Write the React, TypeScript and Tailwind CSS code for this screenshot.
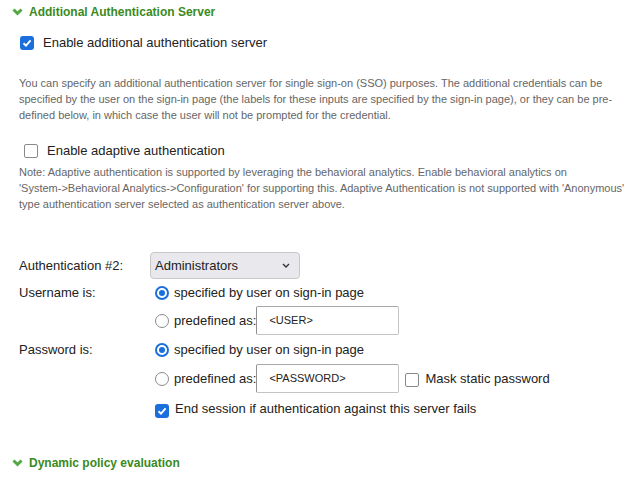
import React from 'react';

const Chevron: React.FC = () => (
  <svg width="11" height="8" viewBox="0 0 11 8" className="shrink-0">
    <polyline points="1.5,1.5 5.5,5.5 9.5,1.5" fill="none" stroke="#52a844" strokeWidth="3" strokeLinejoin="miter" />
  </svg>
);

const Check: React.FC<{ on?: boolean }> = ({ on }) =>
  on ? (
    <span className="flex h-[14px] w-[14px] shrink-0 items-center justify-center rounded-[3px] bg-[#1a6fdc]">
      <svg width="10" height="10" viewBox="0 0 10 10">
        <polyline points="1.5,5.2 4,7.6 8.6,2.4" fill="none" stroke="white" strokeWidth="1.9" />
      </svg>
    </span>
  ) : (
    <span className="block h-[14px] w-[14px] shrink-0 rounded-[2px] border-[1.5px] border-[#8a8a8a] bg-white" />
  );

const Radio: React.FC<{ on?: boolean }> = ({ on }) =>
  on ? (
    <span className="flex h-[14px] w-[14px] shrink-0 items-center justify-center rounded-full border-2 border-[#1a6fdc] bg-white">
      <span className="h-[6px] w-[6px] rounded-full bg-[#1a6fdc]" />
    </span>
  ) : (
    <span className="block h-[14px] w-[14px] shrink-0 rounded-full border-[1.5px] border-[#8a8a8a] bg-white" />
  );

const Header: React.FC<{ title: string }> = ({ title }) => (
  <div className="flex h-[16px] items-center gap-[6px] pl-[12px]">
    <Chevron />
    <span className="text-[12px] font-bold text-[#3a8a22]">{title}</span>
  </div>
);

const TextBox: React.FC<{ value: string }> = ({ value }) => (
  <div className="flex h-[29px] w-[143px] items-center rounded-[2px] border border-[#c4c4c4] border-l-[#8f8f8f] border-t-[#a8a8a8] bg-white pl-[12px] text-[11px] text-[#222]">
    {value}
  </div>
);

export default function App() {
  return (
    <div className="min-h-[485px] w-[628px] bg-white pt-[4px] text-[#333]" style={{ fontFamily: '"Liberation Sans", Arial, sans-serif' }}>
      <Header title="Additional Authentication Server" />

      <div className="mt-[13px] flex h-[20px] items-center gap-[9px] pl-[20px] text-[13px] text-[#222]">
        <Check on />
        <span>Enable additional authentication server</span>
      </div>

      <div className="mt-[22px] pl-[19px] text-[11px] leading-[16px] text-[#666]">
        <div className="whitespace-nowrap">You can specify an additional authentication server for single sign-on (SSO) purposes. The additional credentials can be</div>
        <div className="whitespace-nowrap">specified by the user on the sign-in page (the labels for these inputs are specified by the sign-in page), or they can be pre-</div>
        <div className="whitespace-nowrap">defined below, in which case the user will not be prompted for the credential.</div>
      </div>

      <div className="mt-[18px] flex h-[20px] items-center gap-[9px] pl-[24px] text-[13px] text-[#222]">
        <Check />
        <span>Enable adaptive authentication</span>
      </div>

      <div className="mt-[3px] pl-[19px] text-[11px] leading-[16px] text-[#666]">
        <div className="whitespace-nowrap">Note: Adaptive authentication is supported by leveraging the behavioral analytics. Enable behavioral analytics on</div>
        <div className="whitespace-nowrap">'System-&gt;Behavioral Analytics-&gt;Configuration' for supporting this. Adaptive Authentication is not supported with 'Anonymous'</div>
        <div className="whitespace-nowrap">type authentication server selected as authentication server above.</div>
      </div>

      <div className="mt-[40px] grid grid-cols-[131px_1fr] pl-[19px] text-[13px] text-[#222]">
        <div className="flex h-[27px] items-center">Authentication #2:</div>
        <div className="flex h-[27px] w-[150px] items-center justify-between rounded-[4px] border border-[#c8c8c8] bg-[#e9e9ed] pl-[4px] pr-[9px]">
          <span>Administrators</span>
          <svg width="8" height="5" viewBox="0 0 8 5">
            <polyline points="1,1 4,4 7,1" fill="none" stroke="#333" strokeWidth="1.4" />
          </svg>
        </div>

        <div className="mt-[4px] flex h-[20px] items-center">Username is:</div>
        <div className="mt-[4px] flex h-[20px] items-center gap-[5px] pl-[5px]">
          <Radio on />
          <span>specified by user on sign-in page</span>
        </div>

        <div />
        <div className="mt-[3px] flex items-center pl-[5px]">
          <Radio />
          <span className="ml-[5px]">predefined as:</span>
          <TextBox value="<USER>" />
        </div>

        <div className="mt-[5px] flex h-[20px] items-center">Password is:</div>
        <div className="mt-[5px] flex h-[20px] items-center gap-[5px] pl-[5px]">
          <Radio on />
          <span>specified by user on sign-in page</span>
        </div>

        <div />
        <div className="mt-[4px] flex items-center pl-[5px]">
          <Radio />
          <span className="ml-[5px]">predefined as:</span>
          <TextBox value="<PASSWORD>" />
          <span className="ml-[6px] mt-[3px]">
            <Check />
          </span>
          <span className="ml-[6px]">Mask static password</span>
        </div>

        <div />
        <div className="mt-[6px] flex h-[20px] items-center gap-[6px] pl-[5px]">
          <span className="mt-[3px]">
            <Check on />
          </span>
          <span>End session if authentication against this server fails</span>
        </div>
      </div>

      <div className="mt-[36px]">
        <Header title="Dynamic policy evaluation" />
      </div>
    </div>
  );
}
